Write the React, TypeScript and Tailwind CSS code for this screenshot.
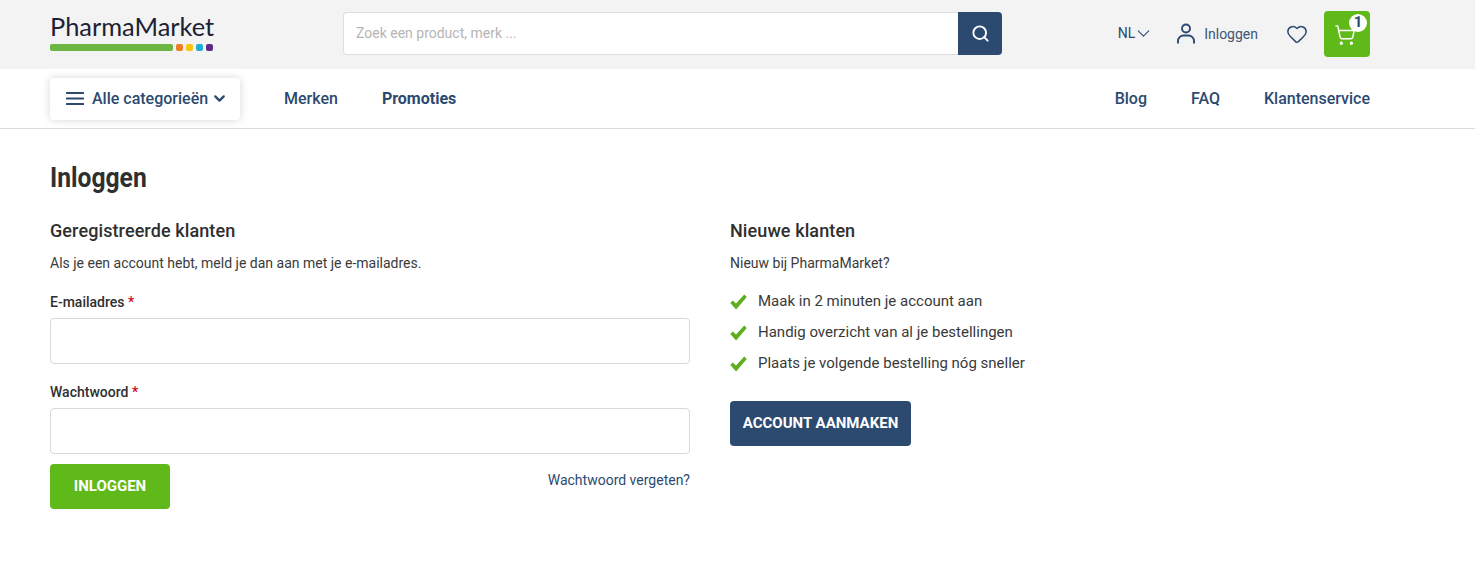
import { ChevronDown, Heart, Search, ShoppingCart } from "lucide-react";

const BLUE = "text-[#2c4a70]";

function Logo() {
  return (
    <div className="flex w-[164px] flex-col">
      <span className="font-['Lato',sans-serif] text-[25.4px] leading-[26px] text-[#1c2233]">PharmaMarket</span>
      <div className="mt-[5px] flex h-[7px] gap-[3px]">
        <span className="w-[123px] rounded-[2px] bg-[#6cb744]" />
        <span className="w-[7px] rounded-[2px] bg-[#ee7d23]" />
        <span className="w-[7px] rounded-[2px] bg-[#fcc30b]" />
        <span className="w-[7px] rounded-[2px] bg-[#22aed1]" />
        <span className="w-[7px] rounded-[2px] bg-[#5b2c86]" />
      </div>
    </div>
  );
}

function Field({ label }: { label: string }) {
  return (
    <div>
      <label className="block text-[14px] leading-[20px] font-medium text-[#2f2f2f]">
        {label} <span className="text-[#d0021b]">*</span>
      </label>
      <input className="mt-[6px] block h-[46px] w-full rounded-[4px] border border-[#d9d9d9] bg-white" />
    </div>
  );
}

function CheckMark() {
  return (
    <svg width="17" height="16" viewBox="0 0 17 16" className="shrink-0">
      <path d="M0.3 9 L2.8 6.4 L6 9.6 L14.3 0.6 L16.8 3 L6.1 15.6 Z" fill="#5fad20" />
    </svg>
  );
}

function Usp({ text }: { text: string }) {
  return (
    <li className="flex h-[31px] items-center gap-[11px] text-[15px] text-[#3a3a3a]">
      <CheckMark />
      {text}
    </li>
  );
}

export default function App() {
  return (
    <div className="min-h-[563px] bg-white font-['Roboto',sans-serif]">
      <header className="h-[69px] bg-[#f3f3f3]">
        <div className="mx-[50px] mr-[105px] flex h-full items-center pb-[2px]">
          <div className="mb-[4px]">
            <Logo />
          </div>
          <div className="ml-[129px] flex h-[43px] w-[659px]">
            <div className="flex flex-1 items-center rounded-l-[4px] border border-r-0 border-[#dedede] bg-white pl-[12px] text-[14px] text-[#b5b5b5]">
              Zoek een product, merk ...
            </div>
            <button className="flex w-[44px] items-center justify-center rounded-r-[4px] bg-[#2c4a70] text-white">
              <Search size={19} strokeWidth={2.4} />
            </button>
          </div>
          <div className={`ml-auto flex items-center ${BLUE}`}>
            <span className="flex items-center text-[14px]">
              NL
              <ChevronDown size={21} strokeWidth={1.2} className="ml-[-2px]" />
            </span>
            <span className="ml-[23px] flex items-center gap-[9px] text-[14px] text-[#3f5675]">
              <svg width="18" height="21" viewBox="0 0 18 21" fill="none" stroke="#2c4a70" strokeWidth="1.9">
                <circle cx="9" cy="5.5" r="4" />
                <path d="M1 20.5v-2.5a5.5 5.5 0 0 1 5.5-5.5h5a5.5 5.5 0 0 1 5.5 5.5v2.5" />
              </svg>
              <span className="mt-[2px]">Inloggen</span>
            </span>
            <Heart size={22} strokeWidth={1.6} className="ml-[28px]" />
            <div className="relative ml-[16px] flex h-[46px] w-[46px] items-center justify-center rounded-[4px] bg-[#5fb918] text-white">
              <ShoppingCart size={22} strokeWidth={1.6} className="mr-[5px] mt-[3px]" />
              <span className="absolute right-[3px] top-[3px] flex h-[18px] w-[18px] items-center justify-center rounded-full bg-white text-[15px] font-bold text-[#2c4a70]">
                1
              </span>
            </div>
          </div>
        </div>
      </header>

      <nav className="h-[60px] border-b border-[#dcdcdc] bg-white">
        <div className={`mx-[50px] mr-[105px] flex h-[59px] items-center text-[16px] font-medium ${BLUE}`}>
          <button className="flex h-[42px] w-[190px] items-center rounded-[4px] bg-white pl-[16px] shadow-[0_0_8px_rgba(0,0,0,0.16)]">
            <svg width="18" height="13" viewBox="0 0 18 13" className="mr-[8px]" fill="#2c4a70">
              <rect y="0" width="18" height="2" rx="0.5" />
              <rect y="5.5" width="18" height="2" rx="0.5" />
              <rect y="11" width="18" height="2" rx="0.5" />
            </svg>
            Alle categorieën
            <ChevronDown size={17} strokeWidth={3.2} className="ml-[3px]" />
          </button>
          <a className="ml-[44px]">Merken</a>
          <a className="ml-[44px] font-bold">Promoties</a>
          <div className="ml-auto flex gap-[44px]">
            <a>Blog</a>
            <a>FAQ</a>
            <a>Klantenservice</a>
          </div>
        </div>
      </nav>

      <main className="px-[50px] text-[#2f2f2f]">
        <h1 className="mt-[32px] origin-left scale-x-[0.88] text-[28px] leading-[34px] font-bold">Inloggen</h1>
        <div className="mt-[23px] flex gap-[40px]">
          <section className="w-[640px]">
            <h2 className="text-[18px] leading-[26px] font-medium tracking-[0.1px]">Geregistreerde klanten</h2>
            <p className="mt-[9px] text-[14px] leading-[20px] text-[#3a3a3a]">
              Als je een account hebt, meld je dan aan met je e-mailadres.
            </p>
            <div className="mt-[19px] flex flex-col gap-[18px]">
              <Field label="E-mailadres" />
              <Field label="Wachtwoord" />
            </div>
            <div className="mt-[10px] flex items-start justify-between">
              <button className="h-[45px] w-[120px] rounded-[4px] bg-[#5fb918] text-[15px] font-bold text-white">
                INLOGGEN
              </button>
              <a className={`mt-[6px] text-[14px] leading-[20px] ${BLUE}`}>Wachtwoord vergeten?</a>
            </div>
          </section>
          <section>
            <h2 className="text-[18px] leading-[26px] font-medium tracking-[0.1px]">Nieuwe klanten</h2>
            <p className="mt-[9px] text-[14px] leading-[20px] text-[#3a3a3a]">Nieuw bij PharmaMarket?</p>
            <ul className="mt-[13px]">
              <Usp text="Maak in 2 minuten je account aan" />
              <Usp text="Handig overzicht van al je bestellingen" />
              <Usp text="Plaats je volgende bestelling nóg sneller" />
            </ul>
            <button className="mt-[22px] h-[45px] w-[181px] rounded-[4px] bg-[#2c4a70] text-[15px] font-bold text-white">
              ACCOUNT AANMAKEN
            </button>
          </section>
        </div>
      </main>
    </div>
  );
}
